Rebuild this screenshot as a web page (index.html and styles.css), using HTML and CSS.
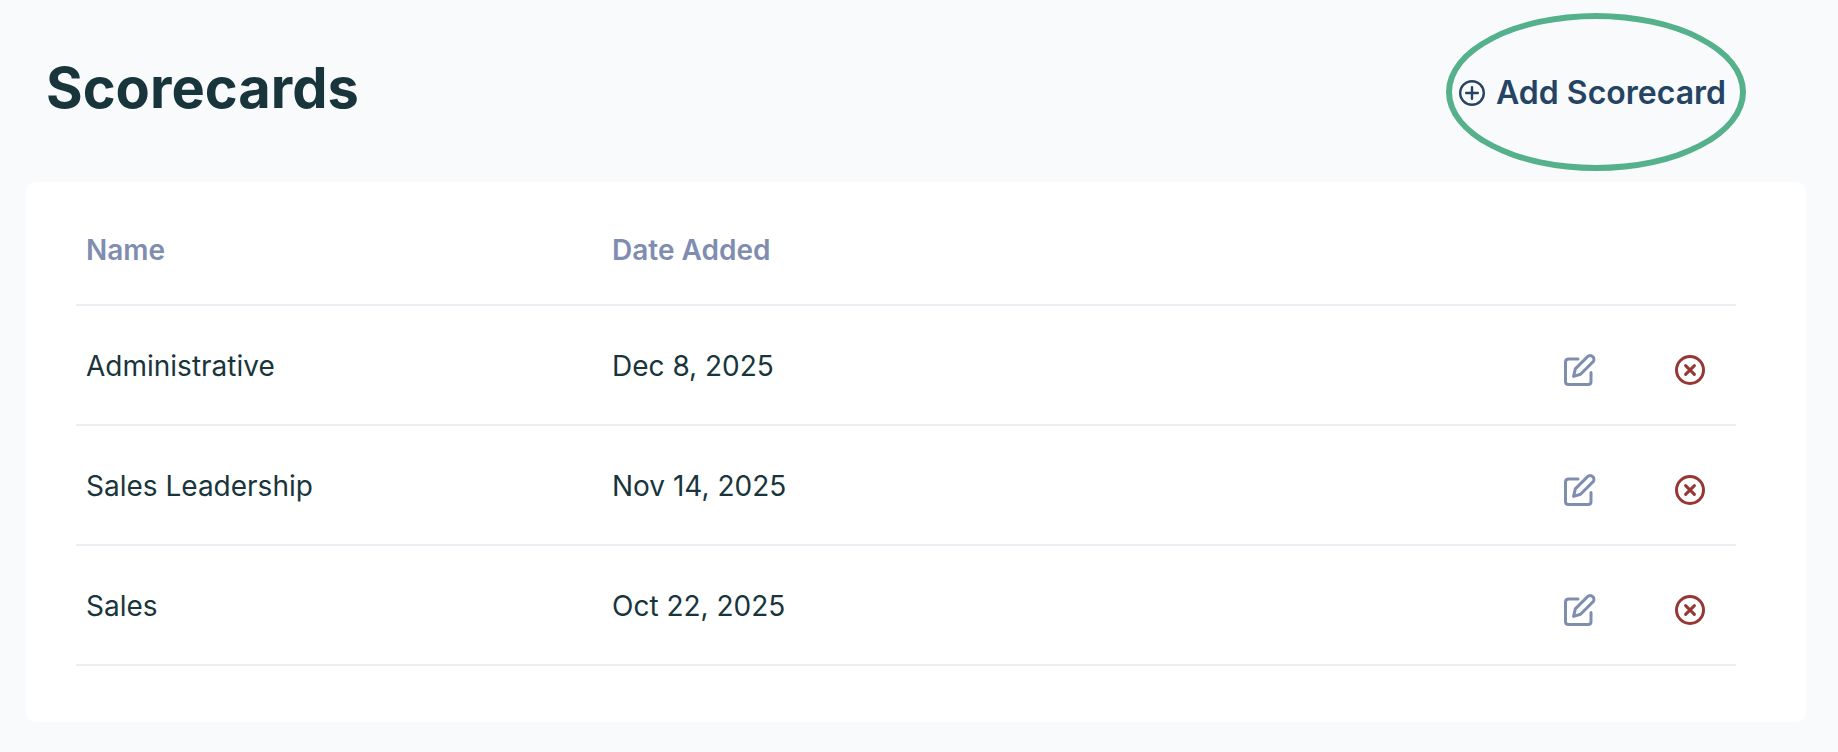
FILE: index.html
```
<!DOCTYPE html>
<html lang="en">
<head>
    <meta charset="UTF-8">
    <meta name="viewport" content="width=device-width, initial-scale=1.0">
    <title>Scorecards</title>
    <link rel="stylesheet" href="styles.css">
</head>
<body>

<!-- Shared icons -->
<svg class="icon-defs" aria-hidden="true">
    <symbol id="icon-edit" viewBox="0 0 34 34">
        <path d="M15 6H5.500Q2.500 6 2.500 9V28.500Q2.500 31.500 5.500 31.500H25Q28 31.500 28 28.500V19.500"/>
        <path d="M24.600 3.600a3.500 3.500 0 0 1 5 0l.300.300a3.500 3.500 0 0 1 0 5L17.500 21.300 10.600 23.400l1.700-7.500z"/>
    </symbol>
    <symbol id="icon-delete" viewBox="0 0 30 30">
        <circle cx="15" cy="15" r="13.500"/>
        <path d="M10.600 10.600l8.800 8.800M19.400 10.600l-8.800 8.800"/>
    </symbol>
</svg>

<div class="page">
    <header class="page-header">
        <h1>Scorecards</h1>
        <button type="button" class="add-button">
            <svg class="add-icon" viewBox="0 0 26 26" aria-hidden="true">
                <circle cx="13" cy="13" r="11.800"/>
                <path d="M13 7.200v11.600M7.200 13h11.600"/>
            </svg>
            Add Scorecard
        </button>
    </header>

    <main class="card">
        <table class="scorecards">
            <thead>
                <tr>
                    <th class="col-name">Name</th>
                    <th>Date Added</th>
                    <td></td>
                </tr>
            </thead>
            <tbody>
                <tr>
                    <td>Administrative</td>
                    <td>Dec 8, 2025</td>
                    <td>
                        <div class="actions">
                            <button type="button" class="edit" aria-label="Edit Administrative"><svg><use href="#icon-edit"/></svg></button>
                            <button type="button" class="delete" aria-label="Delete Administrative"><svg><use href="#icon-delete"/></svg></button>
                        </div>
                    </td>
                </tr>
                <tr>
                    <td>Sales Leadership</td>
                    <td>Nov 14, 2025</td>
                    <td>
                        <div class="actions">
                            <button type="button" class="edit" aria-label="Edit Sales Leadership"><svg><use href="#icon-edit"/></svg></button>
                            <button type="button" class="delete" aria-label="Delete Sales Leadership"><svg><use href="#icon-delete"/></svg></button>
                        </div>
                    </td>
                </tr>
                <tr>
                    <td>Sales</td>
                    <td>Oct 22, 2025</td>
                    <td>
                        <div class="actions">
                            <button type="button" class="edit" aria-label="Edit Sales"><svg><use href="#icon-edit"/></svg></button>
                            <button type="button" class="delete" aria-label="Delete Sales"><svg><use href="#icon-delete"/></svg></button>
                        </div>
                    </td>
                </tr>
            </tbody>
        </table>
    </main>
</div>

</body>
</html>
```
FILE: styles.css
```
* {
    margin: 0;
    padding: 0;
    box-sizing: border-box;
}

body {
    font-family: Inter, "Liberation Sans", sans-serif;
    font-size: 28px;
    line-height: 40px;
    background-color: #f8fafc;
    color: #19353c;
}

button {
    background: none;
    border: none;
    font-family: inherit;
    color: inherit;
    cursor: pointer;
}

svg {
    display: block;
    fill: none;
    stroke: currentColor;
    stroke-width: 3;
    stroke-linecap: round;
    stroke-linejoin: round;
}

.icon-defs {
    display: none;
}

.page {
    padding: 0 32px 30px 26px;
}

.page-header {
    display: flex;
    justify-content: space-between;
    align-items: center;
    padding: 56px 80px 52px 20px;
}

.page-header h1 {
    font-size: 56px;
    font-weight: 700;
    line-height: 64px;
    padding-bottom: 10px;
}

.add-button {
    position: relative;
    display: flex;
    align-items: center;
    gap: 11px;
    font-size: 32px;
    font-weight: 600;
    line-height: 40px;
    color: #254463;
}

/* ring around the add button */
.add-button::after {
    content: "";
    position: absolute;
    top: -60px;
    bottom: -58px;
    left: -13px;
    right: -20px;
    border: 6px solid #55b08c;
    border-radius: 50%;
    pointer-events: none;
}

.add-icon {
    width: 26px;
    height: 26px;
    stroke-width: 2.4;
}

.card {
    background-color: #fff;
    border-radius: 10px;
    padding: 2px 70px 56px 50px;
}

.scorecards {
    width: 100%;
    border-collapse: separate;
    border-spacing: 0;
}

.scorecards th,
.scorecards td {
    height: 120px;
    padding: 2px 10px 0;
    text-align: left;
    vertical-align: middle;
    border-bottom: 2px solid #ebeef3;
}

.scorecards thead th,
.scorecards thead td {
    height: 122px;
    padding-top: 12px;
}

.scorecards th {
    font-weight: 600;
    color: #7f8eb0;
}

.scorecards .col-name {
    width: 526px;
}

.actions {
    display: flex;
    justify-content: flex-end;
    align-items: center;
    gap: 78px;
    padding: 8px 21px 0 0;
}

.edit {
    color: #7f8eb0;
}

.edit svg {
    width: 34px;
    height: 34px;
}

.delete {
    color: #963734;
}

.delete svg {
    width: 30px;
    height: 30px;
}
```
